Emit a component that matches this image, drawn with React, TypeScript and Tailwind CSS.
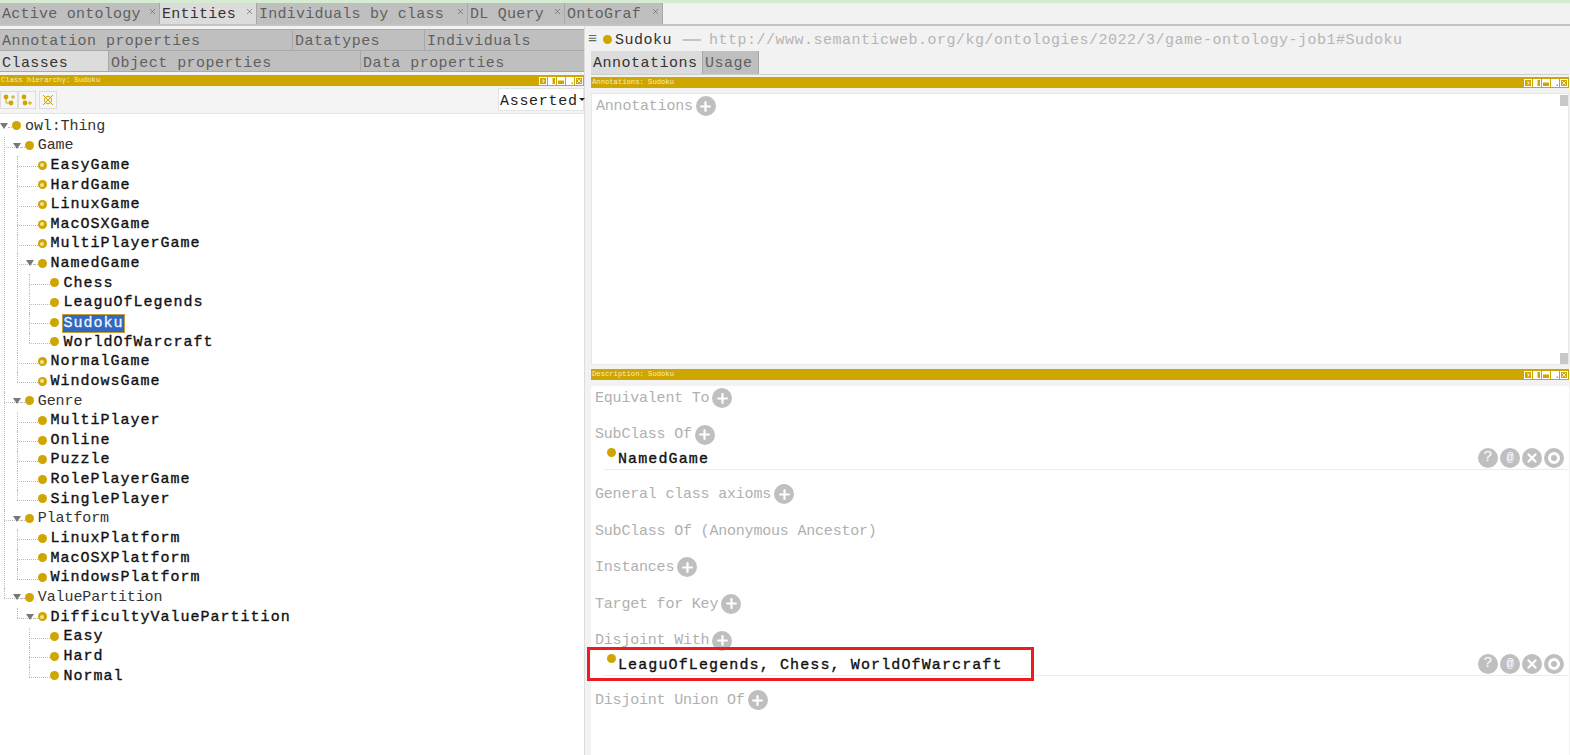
import { Plus, X } from "lucide-react";

type TreeNode = {
  name: string;
  defined?: boolean;
  selected?: boolean;
  children?: TreeNode[];
};

const tree: TreeNode = {
  name: "owl:Thing",
  children: [
    {
      name: "Game",
      children: [
        { name: "EasyGame", defined: true },
        { name: "HardGame", defined: true },
        { name: "LinuxGame", defined: true },
        { name: "MacOSXGame", defined: true },
        { name: "MultiPlayerGame", defined: true },
        {
          name: "NamedGame",
          children: [
            { name: "Chess" },
            { name: "LeaguOfLegends" },
            { name: "Sudoku", selected: true },
            { name: "WorldOfWarcraft" },
          ],
        },
        { name: "NormalGame", defined: true },
        { name: "WindowsGame", defined: true },
      ],
    },
    {
      name: "Genre",
      children: [
        { name: "MultiPlayer" },
        { name: "Online" },
        { name: "Puzzle" },
        { name: "RolePlayerGame" },
        { name: "SinglePlayer" },
      ],
    },
    {
      name: "Platform",
      children: [
        { name: "LinuxPlatform" },
        { name: "MacOSXPlatform" },
        { name: "WindowsPlatform" },
      ],
    },
    {
      name: "ValuePartition",
      children: [
        {
          name: "DifficultyValuePartition",
          defined: true,
          children: [{ name: "Easy" }, { name: "Hard" }, { name: "Normal" }],
        },
      ],
    },
  ],
};

function Dot({ defined }: { defined?: boolean }) {
  if (defined) {
    return (
      <span className="flex h-[9px] w-[9px] items-center justify-center rounded-full bg-[#cfa600]">
        <span className="h-[4px] w-[4px] rounded-full bg-[#f0e2a0]" />
      </span>
    );
  }
  return <span className="block h-[9px] w-[9px] rounded-full bg-[#cfa600]" />;
}

function Row({ node, depth, last }: { node: TreeNode; depth: number; last: boolean }) {
  const bold = depth > 1;
  return (
    <div className="relative">
      {depth > 0 && (
        <span
          className={`absolute left-[-9px] top-0 border-l border-dotted border-[#bbbbbb] ${last ? "h-[10px]" : "h-full"}`}
        />
      )}
      <div className="relative flex h-[19.65px] items-center">
        <span className="relative h-full w-[12px] shrink-0">
          {depth > 0 && (
            <span className="absolute left-[-9px] top-[10px] w-[21px] border-t border-dotted border-[#bbbbbb]" />
          )}
          {node.children && (
            <span className="absolute left-0 top-[6px] h-0 w-0 border-x-[4px] border-t-[6px] border-x-transparent border-t-[#777777]" />
          )}
          {node.children && <span className="absolute left-[8px] top-[10px] w-[4px] border-t border-dotted border-[#bbbbbb]" />}
        </span>
        <span className="mb-[2px] shrink-0">
          <Dot defined={node.defined} />
        </span>
        <span
          className={
            node.selected
              ? "ml-[3px] border border-[#c99a3a] bg-[#3168c0] pr-[1px] text-[15px] leading-[17px] tracking-[1px] text-[#f2f6ff] [-webkit-text-stroke:0.3px_#f2f6ff]"
              : bold
                ? "ml-[4px] text-[15px] tracking-[1px] text-[#111111] [-webkit-text-stroke:0.35px_#111111]"
                : "ml-[4px] text-[15px] tracking-[-0.1px] text-[#333333]"
          }
        >
          {node.name}
        </span>
      </div>
      {node.children && (
        <div className="ml-[12.8px]">
          {node.children.map((c, i) => (
            <Row key={c.name} node={c} depth={depth + 1} last={i === node.children!.length - 1} />
          ))}
        </div>
      )}
    </div>
  );
}

function Tab({
  label,
  width,
  active,
  close,
  className = "",
}: {
  label: string;
  width: string;
  active?: boolean;
  close?: boolean;
  className?: string;
}) {
  return (
    <div
      className={`flex h-full shrink-0 items-center justify-between border-r border-[#a8a8a8] pl-[2px] ${width} ${active ? "bg-[#dcdcdc] text-[#333333]" : "bg-[#bfbfbf] text-[#5f5f5f]"} ${className}`}
    >
      <span className="whitespace-nowrap pt-[4px]">{label}</span>
      {close && <X className="mb-[4px] mr-[2px] h-[9px] w-[9px] text-[#555555]" strokeWidth={1.5} />}
    </div>
  );
}

function WindowButtons() {
  return (
    <div className="flex items-center gap-[1px]">
      <svg width="8" height="8" viewBox="0 0 8 8" fill="none" stroke="#fff">
        <rect x=".5" y=".5" width="7" height="7" />
        <path d="M3 3h2v1.5H4V6" strokeWidth=".7" />
      </svg>
      <svg width="8" height="8" viewBox="0 0 8 8" fill="none" stroke="#fff">
        <rect x=".5" y=".5" width="7" height="7" />
        <rect x="1" y="1" width="3" height="6" fill="#fff" />
      </svg>
      <svg width="8" height="8" viewBox="0 0 8 8" fill="none" stroke="#fff">
        <rect x=".5" y=".5" width="7" height="7" />
        <rect x="1" y="1" width="6" height="2" fill="#fff" />
      </svg>
      <svg width="8" height="8" viewBox="0 0 8 8" fill="#fff">
        <rect width="8" height="8" />
        <rect x="5.5" y="5.5" width="1.5" height="1.5" fill="#cfa600" />
      </svg>
      <svg width="8" height="8" viewBox="0 0 8 8" fill="none" stroke="#fff">
        <rect x=".5" y=".5" width="7" height="7" />
        <path d="M2 2l4 4M6 2l-4 4" strokeWidth=".8" />
      </svg>
    </div>
  );
}

function GoldBar({ title }: { title: string }) {
  return (
    <div className="flex h-[11px] items-center justify-between bg-[#cfa600] pr-[1px]">
      <span className="pl-[1px] text-[7.2px] leading-none text-[#f6ecc4]">{title}</span>
      <WindowButtons />
    </div>
  );
}

function RoundButton({ children }: { children: React.ReactNode }) {
  return (
    <span className="flex h-[20px] w-[20px] items-center justify-center rounded-full bg-[#bfbfbf] text-white">
      {children}
    </span>
  );
}

function AddButton() {
  return (
    <span className="ml-[3px]">
      <RoundButton>
        <Plus className="h-[15px] w-[15px]" strokeWidth={3.5} />
      </RoundButton>
    </span>
  );
}

function Section({ title, add = true, items = [] }: { title: string; add?: boolean; items?: string[] }) {
  return (
    <div className="mb-[12.6px]">
      <div className="flex h-[24px] items-center pl-[4px] text-[15px] tracking-[-0.2px] text-[#b0b0b0]">
        <span className="whitespace-pre pt-[2px]">{title}</span>
        {add && <AddButton />}
      </div>
      {items.map((item) => (
        <div key={item} className="ml-[13px] flex h-[23px] items-center border-b border-[#ececec]">
          <span className="mb-[10px] ml-[3px] mr-[2px]">
            <Dot />
          </span>
          <span className="flex-1 pt-[5px] text-[15px] tracking-[1.12px] text-[#111111] [-webkit-text-stroke:0.35px_#111111]">
            {item}
          </span>
          <div className="mr-[5px] flex gap-[2px]">
            <RoundButton>
              <span className="text-[15px] leading-none">?</span>
            </RoundButton>
            <RoundButton>
              <span className="text-[12px] leading-none">@</span>
            </RoundButton>
            <RoundButton>
              <X className="h-[14px] w-[14px]" strokeWidth={4} />
            </RoundButton>
            <RoundButton>
              <span className="h-[12px] w-[12px] rounded-full border-[3px] border-white" />
            </RoundButton>
          </div>
        </div>
      ))}
    </div>
  );
}

function ToolButton({ children }: { children: React.ReactNode }) {
  return (
    <span className="flex h-[18px] w-[18px] items-center justify-center border border-[#dddddd] bg-[#f6f6f6]">
      {children}
    </span>
  );
}

export default function App() {
  return (
    <div className="flex h-[755px] w-[1570px] flex-col overflow-hidden bg-[#f2f2f2] font-['Liberation_Mono',monospace]">
      <div className="h-[3px] bg-[#d6ecd2]" />
      <div className="flex h-[21px] text-[15px] tracking-[0.25px]">
        <Tab label="Active ontology" width="w-[160px]" close />
        <Tab label="Entities" width="w-[97px]" active close />
        <Tab label="Individuals by class" width="w-[211px]" close />
        <Tab label="DL Query" width="w-[97px]" close />
        <Tab label="OntoGraf" width="w-[98px]" close />
      </div>
      <div className="h-[2px] bg-[#c4c4c4]" />

      <div className="flex min-h-0 flex-1">
        {/* left side: entity tabs and class tree */}
        <div className="flex w-[585px] shrink-0 flex-col border-r border-[#dddddd]">
          <div className="mt-[3px] flex h-[22px] border-y border-[#aaaaaa] text-[15px] tracking-[0.45px]">
            <Tab label="Annotation properties" width="w-[293px]" />
            <Tab label="Datatypes" width="w-[132px]" />
            <Tab label="Individuals" width="flex-1" className="border-r-0" />
          </div>
          <div className="flex h-[21px] border-b border-[#aaaaaa] text-[15px] tracking-[0.45px]">
            <Tab label="Classes" width="w-[109px]" className="pt-[2px]" active />
            <Tab label="Object properties" width="w-[252px]" className="pt-[2px]" />
            <Tab label="Data properties" width="flex-1" className="border-r-0 pt-[2px]" />
          </div>
          <div className="mt-[3px]">
            <GoldBar title="Class hierarchy: Sudoku" />
          </div>
          <div className="flex h-[28px] items-center justify-between border-b border-[#e4e4e4] bg-[#f4f4f4]">
            <div className="flex items-center">
              <ToolButton>
                <svg width="12" height="12" viewBox="0 0 12 12" fill="#cfa600">
                  <circle cx="3" cy="3" r="2.4" />
                  <circle cx="8" cy="9" r="2.4" />
                  <path d="M3 5v4h3" stroke="#cfa600" fill="none" />
                  <path d="M8 3h4M10 1v4" stroke="#cfa600" fill="none" />
                </svg>
              </ToolButton>
              <ToolButton>
                <svg width="12" height="12" viewBox="0 0 12 12" fill="#cfa600">
                  <circle cx="3" cy="3" r="2.4" />
                  <circle cx="4" cy="9" r="2.4" />
                  <path d="M7 9h4M9 7v4" stroke="#cfa600" fill="none" />
                </svg>
              </ToolButton>
              <span className="ml-[3px]">
                <ToolButton>
                  <svg width="12" height="12" viewBox="0 0 12 12" fill="none" stroke="#cfa600">
                    <circle cx="6" cy="6" r="3.6" />
                    <path d="M1 1l10 10M11 1L1 11" />
                  </svg>
                </ToolButton>
              </span>
            </div>
            <div className="flex h-[23px] w-[86px] items-center border border-[#e4e4e4] bg-white pl-[1px] text-[15px] tracking-[0.7px] text-[#222222]">
              <span className="pt-[5px]">Asserted</span>
              <span className="ml-[1px] h-0 w-0 border-x-[3px] border-t-[3px] border-x-transparent border-t-[#222222]" />
            </div>
          </div>
          <div className="flex-1 bg-white pt-[3px]">
            <Row node={tree} depth={0} last />
          </div>
        </div>

        {/* right side: selected class */}
        <div className="flex min-w-0 flex-1 flex-col pl-[6px] pr-[1px]">
          <div className="mt-[3px] flex h-[22px] items-center whitespace-pre text-[15px] tracking-[0.5px]">
            <span className="ml-[-3px] w-[13px] text-[15px] text-[#666666]">≡</span>
            <span className="mb-[1px] ml-[2px] mr-[3px]">
              <Dot />
            </span>
            <span className="pt-[2px] text-[#333333]">Sudoku</span>
            <span className="ml-[3px] w-[34px] text-center text-[30px] leading-none text-[#c4c4c4]">—</span>
            <span className="pt-[2px] text-[#b5b5b5]">http://www.semanticweb.org/kg/ontologies/2022/3/game-ontology-job1#Sudoku</span>
          </div>
          <div className="flex h-[24px] border-b border-[#cfcfcf] text-[15px] tracking-[0.5px]">
            <Tab label="Annotations" width="w-[112px]" active />
            <Tab label="Usage" width="w-[56px]" />
          </div>
          <div className="mt-[2px]">
            <GoldBar title="Annotations: Sudoku" />
          </div>
          <div className="relative mt-[5px] h-[272px] border border-[#e8e8e8] bg-white">
            <div className="flex h-[24px] items-center pl-[4px] text-[15px] tracking-[-0.2px] text-[#b0b0b0]">
              <span className="pt-[2px]">Annotations</span>
              <AddButton />
            </div>
            <span className="absolute right-0 top-[1px] h-[11px] w-[8px] bg-[#c8c8c8]" />
            <span className="absolute bottom-0 right-0 h-[11px] w-[8px] bg-[#c8c8c8]" />
          </div>
          <div className="mt-[4px]">
            <GoldBar title="Description: Sudoku" />
          </div>
          <div className="relative mt-[6px] flex-1 bg-white">
            <Section title="Equivalent To" />
            <Section title="SubClass Of" items={["NamedGame"]} />
            <Section title="General class axioms" />
            <Section title="SubClass Of (Anonymous Ancestor)" add={false} />
            <Section title="Instances" />
            <Section title="Target for Key" />
            <Section title="Disjoint With" items={["LeaguOfLegends, Chess, WorldOfWarcraft"]} />
            <Section title="Disjoint Union Of" />
            <span className="absolute left-[-4px] top-[261px] h-[34px] w-[447px] border-[3px] border-[#ed1c24]" />
          </div>
        </div>
      </div>
    </div>
  );
}
